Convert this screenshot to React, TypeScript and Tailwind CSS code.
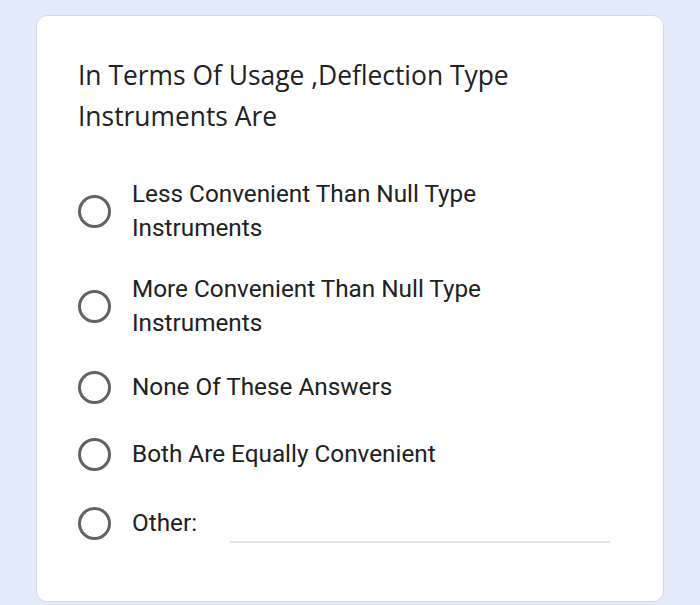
const options = [
  ["Less Convenient Than Null Type", "Instruments"],
  ["More Convenient Than Null Type", "Instruments"],
  ["None Of These Answers"],
  ["Both Are Equally Convenient"],
];

function Radio() {
  return <span className="h-[33px] w-[33px] shrink-0 rounded-full border-[3px] border-[#5f6368]" />;
}

export default function App() {
  return (
    <div className="h-[605px] w-[700px] bg-[#e3ebf9] px-[36px] pt-[15px]" style={{ fontFamily: "Roboto, sans-serif" }}>
      <div className="h-[587px] w-[628px] rounded-[11px] border border-[#d4dbe7] bg-white pl-[41px] pr-[53px] pt-[39px]">
        <h1 className="text-[26.4px] leading-[41px] text-[#202124]" style={{ fontFamily: "'Open Sans', sans-serif" }}>
          In Terms Of Usage ,Deflection Type
          <br />
          Instruments Are
        </h1>
        <div className="mt-[40px] flex flex-col gap-[27px]">
          {options.map((lines, i) => (
            <div key={i} className="flex min-h-[40px] items-center gap-[21px]">
              <Radio />
              <div className="text-[24.3px] leading-[34px] text-[#202124]">
                {lines.map((l, j) => (
                  <div key={j}>{l}</div>
                ))}
              </div>
            </div>
          ))}
          <div className="flex h-[44px] items-center gap-[21px]">
            <Radio />
            <span className="text-[24.3px] leading-[34px] text-[#202124]">Other:</span>
            <span className="ml-[12px] mt-[38px] h-[2px] flex-1 bg-[#e2e3e5]" />
          </div>
        </div>
      </div>
    </div>
  );
}
